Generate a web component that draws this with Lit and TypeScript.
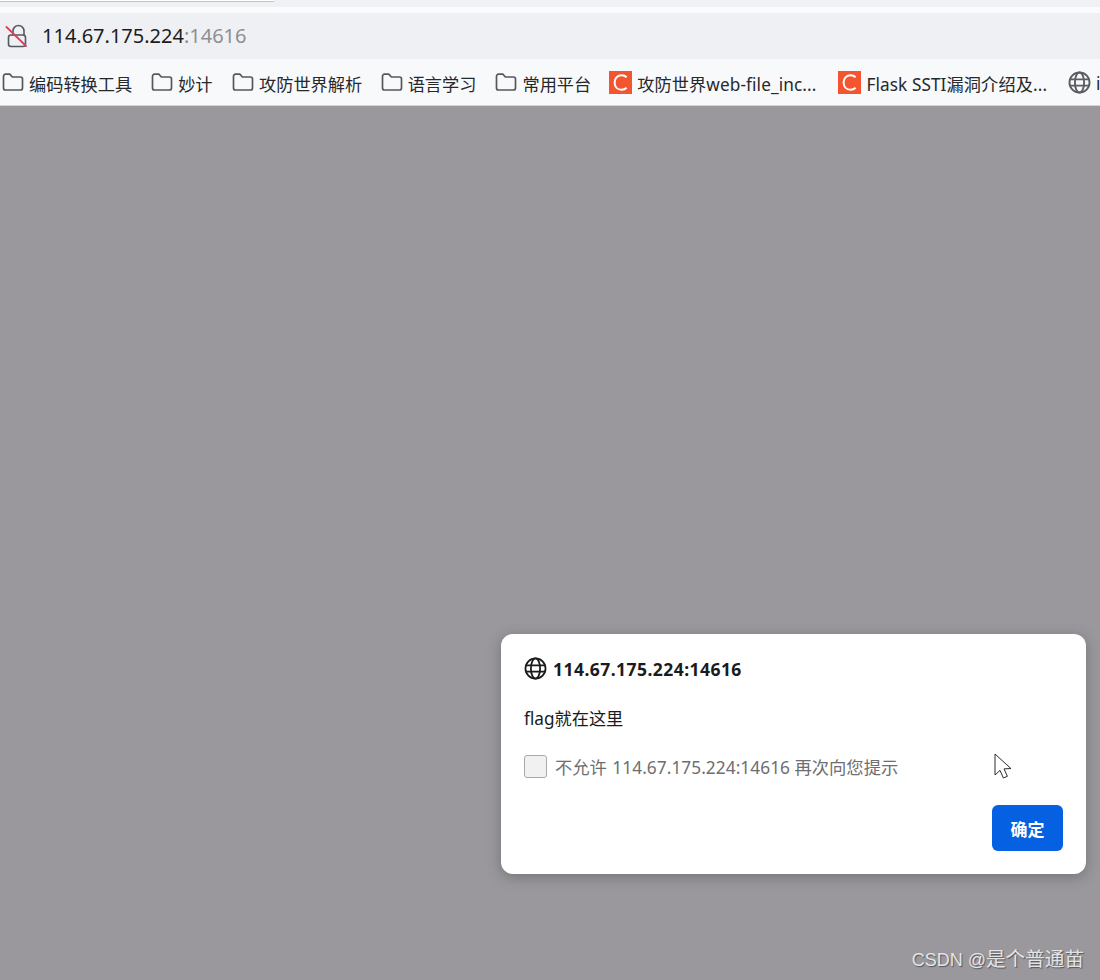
import { LitElement, html, css, svg } from "lit";
import { customElement } from "lit/decorators.js";

const folder = svg`<svg class="ic" viewBox="0 0 22 22" width="22" height="22" fill="none" stroke="#55585c" stroke-width="1.7" stroke-linejoin="round"><path d="M1.5 5.2a2 2 0 0 1 2-2h4.3l2.6 2.8h8.1a2 2 0 0 1 2 2v9a2 2 0 0 1-2 2H3.5a2 2 0 0 1-2-2z"/></svg>`;
const csdn = svg`<svg class="ic" viewBox="0 0 23 23" width="23" height="23"><rect width="23" height="23" fill="#f4552f"/><path d="M17.6 6.2A7 7 0 0 0 12.6 4.2C8.3 4.2 5.6 7.4 5.6 11.5s2.7 7.3 7 7.3a7 7 0 0 0 5-2" fill="none" stroke="#fff" stroke-width="2"/></svg>`;
const globe = (size: number, color: string, w: number) => svg`<svg class="ic" viewBox="0 0 22 22" width="${size}" height="${size}" fill="none" stroke="${color}" stroke-width="${w}"><circle cx="11" cy="11" r="9.6"/><ellipse cx="11" cy="11" rx="4.4" ry="9.6"/><path d="M1.6 8h18.8M1.6 14h18.8"/></svg>`;

const marks: [string, any, number, boolean][] = [
  ["编码转换工具", folder, 2, false],
  ["妙计", folder, 19, false],
  ["攻防世界解析", folder, 19.5, false],
  ["语言学习", folder, 18.5, false],
  ["常用平台", folder, 19, false],
  ["攻防世界web-file_inc...", csdn, 18, true],
  ["Flask SSTI漏洞介绍及...", csdn, 22, true],
  ["i", globe(23, "#5a5d61", 1.8), 21, false],
];

@customElement("app-root")
export class AppRoot extends LitElement {
  static styles = css`
    :host {
      display: block;
      width: 1100px;
      height: 980px;
      position: relative;
      overflow: hidden;
      font-family: "Noto Sans", "Noto Sans CJK SC", sans-serif;
      background: #9a989c;
    }
    .ic { flex: none; display: block; }
    .tabs {
      height: 7px;
      background: #f0f1f4;
    }
    .tab-edge {
      width: 275px;
      height: 1px;
      background: #fff;
      border-bottom: 1px solid #c4c4c6;
      border-radius: 0 0 3px 0;
    }
    .gap { height: 6px; background: #fbfbfd; }
    .address {
      height: 46px;
      box-sizing: border-box;
      padding: 0 0 2px 5px;
      background: #eff0f3;
      display: flex;
      align-items: center;
      gap: 15px;
      font-size: 20px;
      color: #1c1c1e;
    }
    .port { color: #8e8f92; }
    .marks {
      height: 46px;
      box-sizing: content-box;
      background: #f8f9fb;
      border-bottom: 1px solid #d2d3d5;
      display: flex;
      align-items: center;
      overflow: hidden;
      white-space: nowrap;
      font-size: 17.2px;
      color: #26282b;
    }
    .mark { display: flex; align-items: center; gap: 5px; flex: none; }
    .mark .t { position: relative; top: 1px; }
    .mark .wide { letter-spacing: 0.1px; }
    .dialog {
      position: absolute;
      left: 501px;
      top: 634px;
      width: 585px;
      height: 240px;
      box-sizing: border-box;
      padding: 22px 23px 23px;
      background: #fff;
      border-radius: 12px;
      box-shadow: 0 3px 14px rgba(50, 50, 55, 0.35);
      display: flex;
      flex-direction: column;
      color: #1b1b1d;
    }
    .title {
      display: flex;
      align-items: center;
      gap: 6px;
      height: 25px;
      font-size: 17.5px;
      font-weight: 700;
      letter-spacing: 0.45px;
    }
    .msg {
      margin-top: 25px;
      font-size: 17.2px;
      height: 26px;
      line-height: 26px;
    }
    .check {
      margin-top: 22px;
      height: 24px;
      display: flex;
      align-items: center;
      gap: 8px;
      font-size: 17.3px;
      color: #6d6e70;
    }
    .check .addr { letter-spacing: 0.05px; margin-left: 1px; }
    .box {
      width: 21px;
      height: 21px;
      background: #f1f1f1;
      border: 1px solid #a9a9a9;
      border-radius: 3px;
      flex: none;
    }
    .actions {
      margin-top: auto;
      display: flex;
      justify-content: flex-end;
    }
    .ok {
      width: 71px;
      height: 46px;
      border: none;
      border-radius: 6px;
      background: #0561e2;
      color: #fff;
      font: 700 17px "Noto Sans CJK SC", sans-serif;
      padding: 0;
    }
    .cursor { position: absolute; left: 994px; top: 753px; }
    .mark-wm {
      position: absolute;
      right: 16px;
      top: 945px;
      font-family: "Liberation Sans", "Noto Sans CJK SC", sans-serif;
      font-size: 19.6px;
      line-height: 28px;
      color: #e4e4e6;
      text-shadow: 1px 1px 1px #55555a;
      white-space: nowrap;
    }
    .mark-wm .latin { font-size: 18px; }
  `;

  render() {
    return html`
      <div class="tabs"><div class="tab-edge"></div></div>
      <div class="gap"></div>
      <div class="address">
        <svg class="ic" viewBox="0 0 22 26" width="22" height="26" fill="none" stroke-linecap="round">
          <path d="M8 13V9a5.5 5.5 0 0 1 11 0v4" stroke="#55585c" stroke-width="1.6"/>
          <rect x="3.5" y="13" width="17" height="11.5" rx="2.5" stroke="#55585c" stroke-width="1.6"/>
          <path d="M1.5 5 L21 24" stroke="#e6395f" stroke-width="1.8"/>
        </svg>
        <div>114.67.175.224<span class="port">:14616</span></div>
      </div>
      <div class="marks">
        ${marks.map(
          ([t, icon, ml, wide]) => html`<div class="mark" style="margin-left:${ml}px">${icon}<span class="t ${wide ? "wide" : ""}">${t}</span></div>`
        )}
      </div>

      <div class="dialog">
        <div class="title">${globe(23, "#1b1b1d", 1.7)}<span>114.67.175.224:14616</span></div>
        <div class="msg">flag就在这里</div>
        <div class="check"><span class="box"></span><span>不允许 <span class="addr">114.67.175.224:14616</span> 再次向您提示</span></div>
        <div class="actions"><button class="ok">确定</button></div>
      </div>

      <svg class="cursor" viewBox="0 0 19 28" width="19" height="28" fill="#fff" stroke="#2a2a2c" stroke-width="1" stroke-linejoin="round">
        <path d="M1 1v21l5-4.6 3.4 7.6 4-1.7-3.4-7.4 6.9-.4z"/>
      </svg>
      <div class="mark-wm"><span class="latin">CSDN @</span>是个普通苗</div>
    `;
  }
}
